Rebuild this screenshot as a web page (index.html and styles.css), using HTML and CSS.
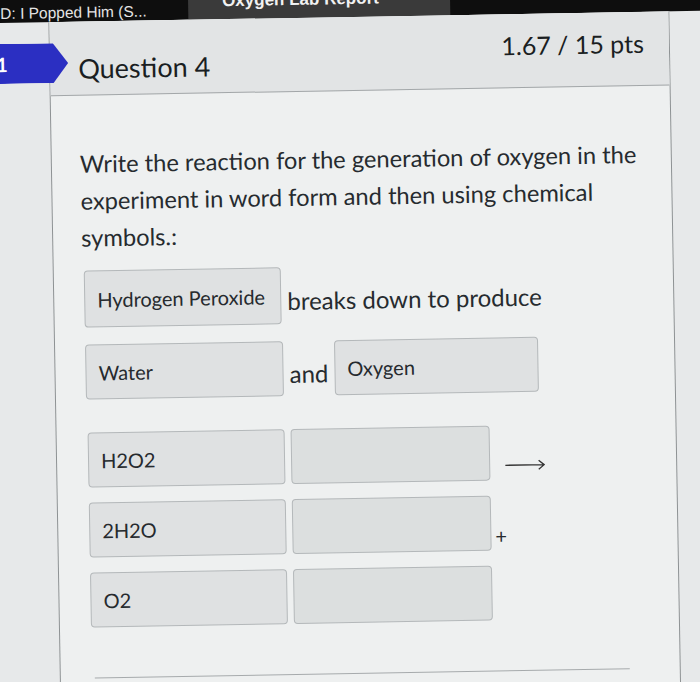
FILE: index.html
```html
<!DOCTYPE html>
<html lang="en">
<head>
<meta charset="utf-8">
<title>Question 4</title>
<link rel="stylesheet" href="styles.css">
</head>
<body>
<div class="screen">
  <div class="tabs">
    <div class="tab tab-current">D: I Popped Him (S...</div>
    <div class="tab tab-other"><span class="tab-clip">Oxygen Lab Report</span></div>
  </div>
  <div class="main">
    <div class="gutter"></div>
    <div class="card">
      <div class="card-head">
        <div class="flag"><span class="flag-num">1</span></div>
        <h2 class="q-title">Question 4</h2>
        <div class="q-pts">1.67 / 15 pts</div>
      </div>
      <div class="card-body">
        <p class="prompt">Write the reaction for the generation of oxygen in the experiment in word form and then using chemical symbols.:</p>
        <div class="row row-first">
          <div class="box">Hydrogen Peroxide</div>
          <span class="word">breaks down to produce</span>
        </div>
        <div class="row row-second">
          <div class="box box-short">Water</div>
          <span class="word">and</span>
          <div class="box box-short box-wide">Oxygen</div>
        </div>
        <div class="formula">
          <div class="frow">
            <div class="box box-f">H2O2</div>
            <div class="box box-f box-empty"></div>
            <svg class="arrow" width="40" height="12" viewBox="0 0 40 12"><path d="M0 6H39M33.5 1.5L39 6L33.5 10.5" fill="none" stroke="#333" stroke-width="1.3"/></svg>
          </div>
          <div class="frow">
            <div class="box box-f">2H2O</div>
            <div class="box box-f box-empty"></div>
            <span class="sym">+</span>
          </div>
          <div class="frow">
            <div class="box box-f">O2</div>
            <div class="box box-f box-empty"></div>
          </div>
        </div>
        <div class="rule"></div>
      </div>
    </div>
  </div>
</div>
</body>
</html>
```

FILE: styles.css
```css
html, body {
  margin: 0;
  height: 100%;
  overflow: hidden;
  background: #e6e8e9;
}

body {
  font-family: Lato, "Open Sans", sans-serif;
}

.screen {
  width: 760px;
  height: 742px;
  margin: -30px 0 0 -30px;
  padding-left: 30px;
  box-sizing: border-box;
  transform: rotate(-1deg);
  display: flex;
  flex-direction: column;
  background: #e7e9ea;
}

.tabs {
  flex: none;
  display: flex;
  height: 47px;
  margin-left: -30px;
  padding-left: 30px;
  background: #0e0e0e;
}

.tab {
  height: 47px;
  box-sizing: border-box;
  padding-top: 30px;
  overflow: hidden;
}

.tab-current {
  width: 194px;
  padding-left: 6px;
  font-family: "Liberation Sans", Arial, sans-serif;
  font-size: 15.5px;
  line-height: 15px;
  color: #e4e4e4;
  white-space: nowrap;
}

.tab-other {
  width: 262px;
  padding-left: 34px;
  background: #3a3a3a;
}

.tab-clip {
  display: block;
  margin-top: -10px;
  font-family: "Liberation Sans", Arial, sans-serif;
  font-weight: 700;
  font-size: 17px;
  line-height: 17px;
  color: #f2f2f2;
  white-space: nowrap;
}

.main {
  flex: 1;
  display: flex;
}

.gutter {
  width: 54px;
  flex: none;
}

.card {
  width: 619px;
  flex: none;
  border-left: 1px solid #8e9294;
  border-right: 1px solid #8e9294;
  background: #eef0f0;
  display: flex;
  flex-direction: column;
}

.card-head {
  position: relative;
  height: 74px;
  box-sizing: border-box;
  flex: none;
  border-bottom: 1px solid #a3a7a9;
  background: #e2e4e5;
  display: flex;
  justify-content: space-between;
  align-items: flex-start;
  padding: 0 25px 0 28px;
}

.flag {
  position: absolute;
  left: -85px;
  top: 21px;
  width: 103px;
  height: 40px;
  background: #2b2fc2;
  clip-path: polygon(0 0, 88px 0, 103px 50%, 88px 100%, 0 100%);
  box-sizing: border-box;
  padding-left: 31px;
  display: flex;
  align-items: center;
}

.flag-num {
  color: #ffffff;
  font-size: 20px;
  font-weight: 700;
}

.q-title {
  margin: 31px 0 0;
  font-size: 27px;
  font-weight: 400;
  line-height: 32px;
  color: #1a1e22;
}

.q-pts {
  margin-top: 16px;
  font-size: 25px;
  line-height: 30px;
  color: #1a1e22;
}

.card-body {
  padding: 50px 0 0 28px;
}

.prompt {
  margin: 0;
  max-width: 560px;
  font-size: 23.7px;
  line-height: 37px;
  color: #262b2f;
}

.row {
  display: flex;
  align-items: center;
  margin-left: 2px;
}

.row-first {
  margin-top: 14px;
}

.row-second {
  margin-top: 17px;
}

.box {
  box-sizing: border-box;
  width: 197px;
  height: 57px;
  flex: none;
  border: 1px solid #b4b8ba;
  border-radius: 4px;
  background: #dfe1e2;
  display: flex;
  align-items: center;
  padding-left: 12px;
  font-size: 20px;
  color: #262a2e;
}

.box-short {
  width: 198px;
  height: 55px;
}

.box-wide {
  width: 204px;
  margin-left: 6px;
}

.word {
  margin: 10px 0 0 6px;
  font-size: 24px;
  color: #262b2f;
}

.formula {
  margin-top: 33px;
  display: flex;
  flex-direction: column;
  gap: 15px;
}

.frow {
  display: flex;
  align-items: center;
  margin-left: 3px;
}

.box-f {
  height: 55px;
}

.box-empty {
  width: 199px;
  margin-left: 6px;
  background: #dcdfdf;
}

.arrow {
  margin: 24px 0 0 15px;
}

.sym {
  margin: 24px 0 0 4px;
  font-size: 20px;
  color: #262b2f;
}

.rule {
  margin: 50px 0 0 6px;
  width: 535px;
  height: 1px;
  background: #a6aaac;
}
```
